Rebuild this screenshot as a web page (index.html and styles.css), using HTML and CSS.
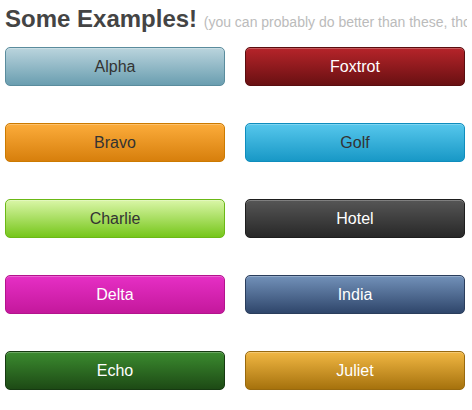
FILE: index.html
```html
<!DOCTYPE html>
<html lang="en">

<head>
    <meta charset="UTF-8">
    <meta name="viewport" content="width=device-width, initial-scale=1.0">
    <title>Button Examples</title>
    <link rel="stylesheet" href="styles.css">
</head>

<body>

    <h1 class="title">Some Examples! <small>(you can probably do better than these, though)</small></h1>

    <div class="buttons">
        <a class="btn alpha">Alpha</a>
        <a class="btn foxtrot">Foxtrot</a>
        <a class="btn bravo">Bravo</a>
        <a class="btn golf">Golf</a>
        <a class="btn charlie">Charlie</a>
        <a class="btn hotel">Hotel</a>
        <a class="btn delta">Delta</a>
        <a class="btn india">India</a>
        <a class="btn echo">Echo</a>
        <a class="btn juliet">Juliet</a>
    </div>

</body>

</html>
```

FILE: styles.css
```css
body {
    margin: 0;
    padding: 5px;
    font-family: "Liberation Sans", Arial, sans-serif;
    background: #fff;
    overflow: hidden;
}

.title {
    margin: 0;
    font-size: 24px;
    line-height: 28px;
    color: #444;
    white-space: nowrap;
    overflow: hidden;
}

.title small {
    font-size: 14px;
    font-weight: normal;
    color: #bbb;
}

.buttons {
    display: grid;
    grid-template-columns: repeat(2, 220px);
    column-gap: 20px;
    row-gap: 37px;
    margin-top: 11px;
}

.btn {
    display: flex;
    justify-content: center;
    align-items: center;
    height: 37px;
    border: 1px solid;
    border-radius: 5px;
    font-size: 16px;
    color: #333;
    cursor: pointer;
    box-shadow: inset 0 1px 0 rgba(255, 255, 255, 0.25);
}

.alpha {
    background: linear-gradient(#bad4dd, #6a9eb0);
    border-color: #5a8c9d;
}

.bravo {
    background: linear-gradient(#fcac3b, #d77f0c);
    border-color: #cc7a00;
}

.charlie {
    background: linear-gradient(#daf6a8, #76c61a);
    border-color: #6bb816;
}

.delta {
    background: linear-gradient(#e62fc5, #c4189c);
    border-color: #b3138d;
    color: #fff;
}

.echo {
    background: linear-gradient(#3b8b2f, #1d4a15);
    border-color: #163a11;
    color: #fff;
}

.foxtrot {
    background: linear-gradient(#b6242a, #691012);
    border-color: #5a0d0f;
    color: #fff;
}

.golf {
    background: linear-gradient(#56c7ec, #1898c6);
    border-color: #0f8dbd;
}

.hotel {
    background: linear-gradient(#565656, #282828);
    border-color: #1e1e1e;
    color: #fff;
}

.india {
    background: linear-gradient(#7291b9, #2f466b);
    border-color: #2a3d5c;
    color: #fff;
}

.juliet {
    background: linear-gradient(#f1b743, #a6720d);
    border-color: #98690e;
    color: #fff;
}
```
